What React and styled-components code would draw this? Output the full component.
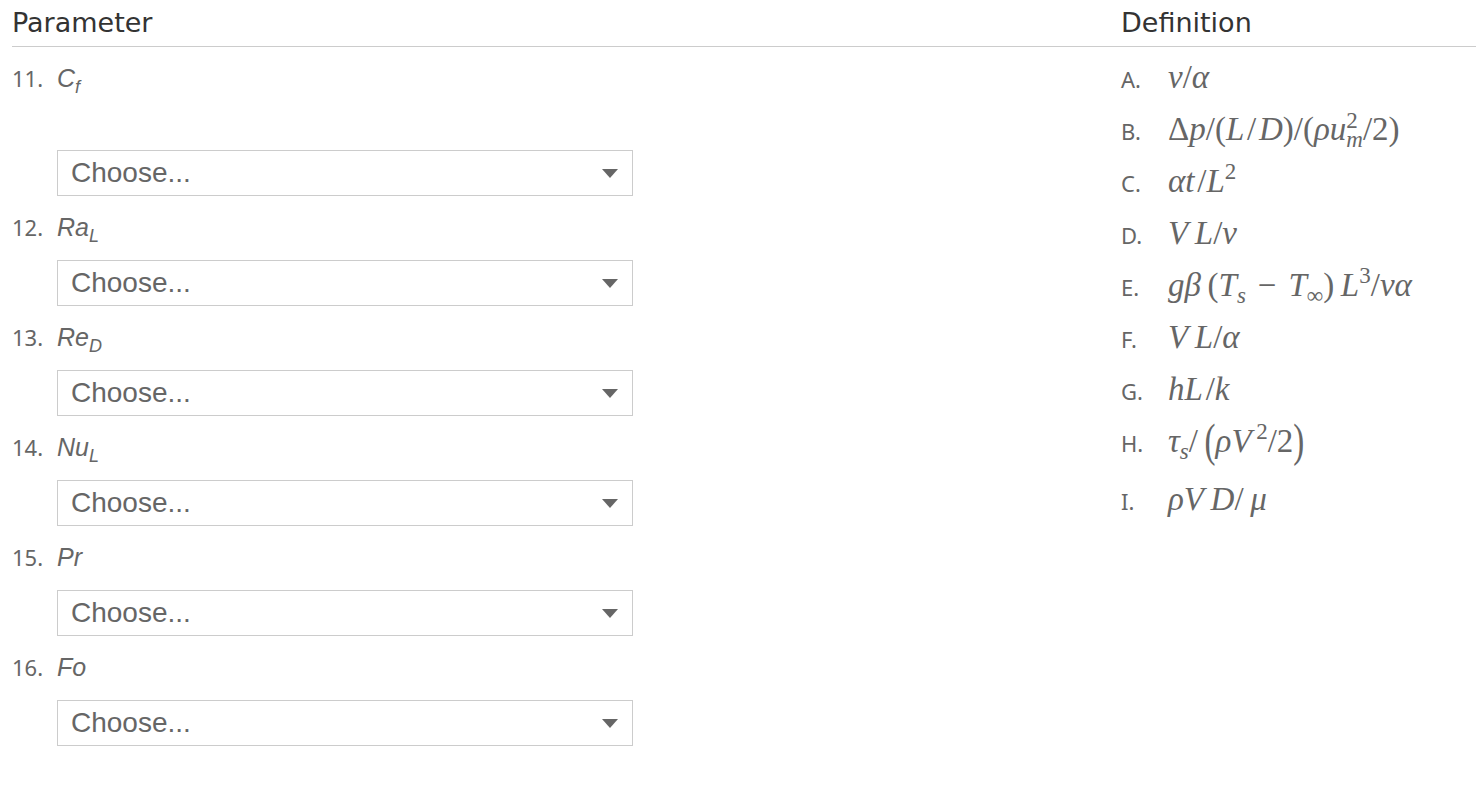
import styled, { createGlobalStyle } from "styled-components";

const HS = "\u200A";

const params = [
  { n: "11.", base: "C", sub: "f", extra: true },
  { n: "12.", base: "Ra", sub: "L" },
  { n: "13.", base: "Re", sub: "D" },
  { n: "14.", base: "Nu", sub: "L" },
  { n: "15.", base: "Pr" },
  { n: "16.", base: "Fo" },
];

export default function App() {
  return (
    <>
      <GlobalStyle />
      <Table>
        <HeadCell>Parameter</HeadCell>
        <HeadCell>Definition</HeadCell>

        <ParamList>
          {params.map(p => (
            <ParamItem key={p.n}>
              <ParamLabel>
                <Num>{p.n}</Num>
                <Sym>
                  {p.base}
                  {p.sub && <SymSub>{p.sub}</SymSub>}
                </Sym>
              </ParamLabel>
              <SelectBox $extra={p.extra}>
                <SelectText>Choose...</SelectText>
                <Arrow viewBox="0 0 16 9">
                  <path d="M0 0h16L8 9z" fill="#666" />
                </Arrow>
              </SelectBox>
            </ParamItem>
          ))}
        </ParamList>

        <DefList>
          <DefItem>
            <Letter>A.</Letter>
            <Math>
              <i>ν</i>/<i>α</i>
            </Math>
          </DefItem>
          <DefItem>
            <Letter>B.</Letter>
            <Math>
              Δ<i>p</i>/(<i>L</i>{HS}/{HS}<i>D</i>)/(<i>ρu</i>
              <Stack>
                <span>2</span>
                <span><i>m</i></span>
              </Stack>
              /2)
            </Math>
          </DefItem>
          <DefItem>
            <Letter>C.</Letter>
            <Math>
              <i>αt</i>{HS}/<i>L</i>
              <Sup>2</Sup>
            </Math>
          </DefItem>
          <DefItem>
            <Letter>D.</Letter>
            <Math>
              <i>V</i>&thinsp;<i>L</i>/<i>ν</i>
            </Math>
          </DefItem>
          <DefItem>
            <Letter>E.</Letter>
            <Math>
              <i>gβ</i>&thinsp;(<i>T</i>
              <Sub><i>s</i></Sub>
              <Op>−</Op>
              <i>T</i>
              <Sub>∞</Sub>)&thinsp;<i>L</i>
              <Sup>3</Sup>/<i>να</i>
            </Math>
          </DefItem>
          <DefItem>
            <Letter>F.</Letter>
            <Math>
              <i>V</i>&thinsp;<i>L</i>/<i>α</i>
            </Math>
          </DefItem>
          <DefItem>
            <Letter>G.</Letter>
            <Math>
              <i>hL</i>{HS}/<i>k</i>
            </Math>
          </DefItem>
          <DefItem $tall>
            <Letter>H.</Letter>
            <Math>
              <i>τ</i>
              <Sub><i>s</i></Sub>/&thinsp;<BigParen>(</BigParen>
              <i>ρV</i>
              <Sup>&thinsp;2</Sup>/2<BigParen>)</BigParen>
            </Math>
          </DefItem>
          <DefItem>
            <Letter>I.</Letter>
            <Math>
              <i>ρV</i>&thinsp;<i>D</i>/&thinsp;<i>μ</i>
            </Math>
          </DefItem>
        </DefList>
      </Table>
    </>
  );
}

/* STYLES */
const GlobalStyle = createGlobalStyle`
  body {
    margin: 0;
    background: #fff;
    font-family: "Noto Sans", sans-serif;
  }
`;

const Table = styled.div`
  display: grid;
  grid-template-columns: 1109px 1fr;
  padding: 8px 0 0 12px;
`;

const HeadCell = styled.div`
  font-family: "DejaVu Sans", sans-serif;
  font-size: 27px;
  line-height: 30px;
  color: #333;
  padding-bottom: 8px;
  border-bottom: 1px solid #ccc;
`;

const ParamList = styled.div`
  display: flex;
  flex-direction: column;
  padding-top: 15px;
`;

const ParamItem = styled.div`
  display: flex;
  flex-direction: column;
  margin-bottom: 15px;
`;

const ParamLabel = styled.div`
  display: flex;
  align-items: baseline;
  height: 32px;
  line-height: 32px;
`;

const Num = styled.span`
  width: 45px;
  font-family: "Noto Sans", sans-serif;
  font-size: 22px;
  color: #666;
`;

const Sym = styled.span`
  font-family: "Liberation Sans", Arial, sans-serif;
  font-style: italic;
  font-size: 25px;
  color: #666;
`;

const SymSub = styled.sub`
  font-size: 18px;
  vertical-align: -6px;
  line-height: 0;
`;

const SelectBox = styled.div`
  margin-left: 45px;
  margin-top: ${p => (p.$extra ? "56px" : "17px")};
  width: 576px;
  height: 46px;
  box-sizing: border-box;
  border: 1px solid #ccc;
  display: flex;
  align-items: center;
  justify-content: space-between;
  padding: 0 14px 0 13px;
`;

const SelectText = styled.span`
  font-family: "Liberation Sans", Arial, sans-serif;
  font-size: 28px;
  color: #666;
`;

const Arrow = styled.svg`
  width: 16px;
  height: 9px;
`;

const DefList = styled.div`
  display: flex;
  flex-direction: column;
  padding-top: 4px;
`;

const DefItem = styled.div`
  display: flex;
  align-items: baseline;
  height: ${p => (p.$tall ? "58px" : "52px")};
  line-height: 52px;
`;

const Letter = styled.span`
  width: 47px;
  font-family: "Noto Sans", sans-serif;
  font-size: 22px;
  color: #666;
`;

const Math = styled.span`
  font-family: "Liberation Serif", "Times New Roman", serif;
  font-size: 33px;
  color: #666;
  white-space: nowrap;
`;

const Op = styled.span`
  padding: 0 12px;
`;

const Sup = styled.sup`
  font-size: 23px;
  line-height: 0;
  vertical-align: 13px;
`;

const Sub = styled.sub`
  font-size: 23px;
  line-height: 0;
  vertical-align: -7px;
`;

const Stack = styled.span`
  display: inline-flex;
  flex-direction: column;
  vertical-align: 12px;
  line-height: 19px;
  font-size: 23px;
`;

const BigParen = styled.span`
  display: inline-block;
  transform: scaleY(1.4);
  font-weight: 300;
`;
